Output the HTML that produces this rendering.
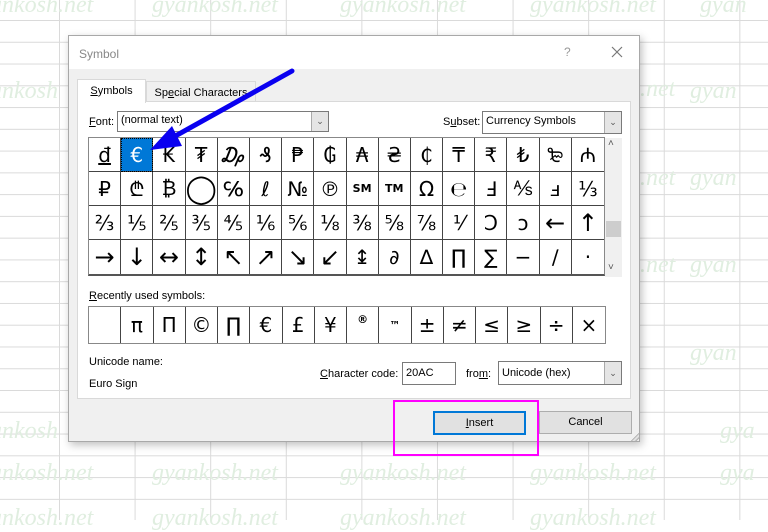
<!DOCTYPE html>
<html><head><meta charset="utf-8"><style>
*{margin:0;padding:0;box-sizing:border-box}
body{width:768px;height:520px;overflow:hidden;position:relative;background:#fff;font-family:"Liberation Sans","DejaVu Sans",sans-serif;font-size:11px;color:#000}
.bg{position:absolute;left:0;top:0;width:768px;height:520px;
background-image:linear-gradient(to right,#dadada 1px,transparent 1px),linear-gradient(to bottom,#dadada 1px,transparent 1px);
background-size:75.6px 21.78px;background-position:59px 20px}
.wm{position:absolute;font-family:"Liberation Serif",serif;font-style:italic;font-size:24px;color:#e0eee0;white-space:nowrap}
.dlg{position:absolute;left:68px;top:35px;width:572px;height:407px;background:#f0f0f0;border:1px solid #a8a8a8;box-shadow:2px 3px 8px rgba(0,0,0,.25)}
.title{position:absolute;left:0;top:0;width:570px;height:33px;background:#fff}
.abs{position:absolute}
.panel{position:absolute;left:8px;top:65px;width:554px;height:298px;background:#fff;border:1px solid #d9d9d9}
.tab{position:absolute;height:23px;border:1px solid #d9d9d9;border-bottom:none;font-size:11px;padding-top:5px;text-align:center}
.grid{position:absolute;left:88px;top:137px;width:517px;height:139px;border:1px solid #888;border-bottom:2px solid #555;display:grid;grid-template-columns:repeat(16,1fr);grid-template-rows:repeat(4,1fr);background:#fff}
.grid div,.recent div{border-right:1px solid #444;border-bottom:1px solid #444;display:flex;align-items:center;justify-content:center;font-size:20px;font-family:"DejaVu Sans",sans-serif;overflow:hidden}
.grid div:nth-child(16n){border-right:none}
.grid div:nth-child(n+49){border-bottom:none}
.recent{position:absolute;left:88px;top:306px;width:518px;height:38px;border:1px solid #888;display:grid;grid-template-columns:repeat(16,1fr);background:#fff}
.recent div{border-bottom:none}
.recent div:last-child{border-right:none}
.sel{background:#0078d7;color:#fff;outline:1px dotted #000;outline-offset:-1px}
.sm{font-size:11px!important;font-weight:bold}
.ar{font-size:24px!important}
.combo{position:absolute;background:#fff;border:1px solid #7a7a7a;font-size:11px;padding:2px 3px}
.combo .dd{position:absolute;right:0;top:0;bottom:0;width:17px;background:#e5e5e5;border-left:1px solid #aaa;text-align:center;font-size:9px;color:#555;line-height:19px}
.btn{position:absolute;background:#e1e1e1;border:1px solid #adadad;font-size:11px;text-align:center;line-height:21px}
u{text-decoration:underline}
</style></head><body>
<div class="bg"></div>
<div class="wm" style="left:-10px;top:-8px">ankosh.net</div>
<div class="wm" style="left:152px;top:-8px">gyankosh.net</div>
<div class="wm" style="left:340px;top:-8px">gyankosh.net</div>
<div class="wm" style="left:530px;top:-8px">gyankosh.net</div>
<div class="wm" style="left:700px;top:-8px">gyan</div>
<div class="wm" style="left:-10px;top:78px">ankosh</div>
<div class="wm" style="left:690px;top:78px">gyan</div>
<div class="wm" style="left:690px;top:165px">gyan</div>
<div class="wm" style="left:690px;top:252px">gyan</div>
<div class="wm" style="left:690px;top:340px">gyan</div>
<div class="wm" style="left:640px;top:76px">.net</div>
<div class="wm" style="left:640px;top:165px">.net</div>
<div class="wm" style="left:640px;top:252px">.net</div>
<div class="wm" style="left:-10px;top:418px">ankosh</div>
<div class="wm" style="left:720px;top:418px">gya</div>
<div class="wm" style="left:-10px;top:460px">ankosh.net</div>
<div class="wm" style="left:152px;top:460px">gyankosh.net</div>
<div class="wm" style="left:340px;top:460px">gyankosh.net</div>
<div class="wm" style="left:530px;top:460px">gyankosh.net</div>
<div class="wm" style="left:720px;top:460px">gya</div>
<div class="wm" style="left:-10px;top:505px">ankosh.net</div>
<div class="wm" style="left:152px;top:505px">gyankosh.net</div>
<div class="wm" style="left:340px;top:505px">gyankosh.net</div>
<div class="wm" style="left:530px;top:505px">gyankosh.net</div>

<div class="dlg">
<div class="title"></div>
<div class="abs" style="left:10px;top:11px;font-size:12px;color:#888">Symbol</div>
<div class="abs" style="left:495px;top:9px;font-size:12px;color:#999">?</div>
<svg class="abs" style="left:542px;top:10px" width="12" height="12"><path d="M1 1L11 11M11 1L1 11" stroke="#777" stroke-width="1.2"/></svg>
<div class="panel"></div>
<div class="tab" style="left:8px;top:43px;width:69px;height:24px;background:#fff"><u>S</u>ymbols</div>
<div class="tab" style="left:77px;top:45px;width:110px;background:#f0f0f0;border-bottom:1px solid #d9d9d9;height:21px">Sp<u>e</u>cial Characters</div>
<div class="abs" style="left:20px;top:80px"><u>F</u>ont:</div>
<div class="combo" style="left:48px;top:75px;width:212px;height:21px">(normal text)<div class="dd">⌄</div></div>
<div class="abs" style="left:374px;top:80px">S<u>u</u>bset:</div>
<div class="combo" style="left:413px;top:75px;width:140px;height:23px;padding-top:3px">Currency Symbols<div class="dd" style="line-height:21px">⌄</div></div>
<div class="abs" style="left:536px;top:102px;width:17px;height:139px;background:#f0f0f0"></div>
<div class="abs" style="left:539px;top:102px;font-size:10px;color:#555">˄</div>
<div class="abs" style="left:537px;top:185px;width:15px;height:16px;background:#cdcdcd"></div>
<div class="abs" style="left:539px;top:226px;font-size:10px;color:#555">˅</div>
<div class="abs" style="left:20px;top:254px"><u>R</u>ecently used symbols:</div>
<div class="abs" style="left:20px;top:320px">Unicode name:</div>
<div class="abs" style="left:20px;top:342px">Euro Sign</div>
<div class="abs" style="left:251px;top:332px"><u>C</u>haracter code:</div>
<div class="combo" style="left:333px;top:326px;width:54px;height:23px;padding-top:4px">20AC</div>
<div class="abs" style="left:397px;top:332px">fro<u>m</u>:</div>
<div class="combo" style="left:429px;top:325px;width:124px;height:24px;padding-top:5px">Unicode (hex)<div class="dd" style="line-height:22px">⌄</div></div>
<div class="btn" style="left:364px;top:375px;width:93px;height:24px;border:2px solid #0078d7;line-height:20px"><u>I</u>nsert</div>
<div class="btn" style="left:470px;top:375px;width:93px;height:23px">Cancel</div>
</div>

<div class="grid">
<div><u>đ</u></div><div class="sel">€</div><div>₭</div><div>₮</div><div style="font-style:italic">₯</div><div>₰</div><div>₱</div><div>₲</div><div>₳</div><div>₴</div><div>₵</div><div>₸</div><div>₹</div><div>₺</div><div>₻</div><div>₼</div>
<div>₽</div><div>₾</div><div>₿</div><div style="font-size:28px">◯</div><div>℅</div><div>ℓ</div><div>№</div><div>℗</div><div class="sm">SM</div><div class="sm">TM</div><div>Ω</div><div>℮</div><div>Ⅎ</div><div>⅍</div><div>ⅎ</div><div>⅓</div>
<div>⅔</div><div>⅕</div><div>⅖</div><div>⅗</div><div>⅘</div><div>⅙</div><div>⅚</div><div>⅛</div><div>⅜</div><div>⅝</div><div>⅞</div><div>⅟</div><div>Ↄ</div><div>ↄ</div><div class="ar">←</div><div class="ar">↑</div>
<div class="ar">→</div><div class="ar">↓</div><div class="ar">↔</div><div class="ar">↕</div><div class="ar">↖</div><div class="ar">↗</div><div class="ar">↘</div><div class="ar">↙</div><div>↨</div><div>∂</div><div>∆</div><div>∏</div><div>∑</div><div>−</div><div>∕</div><div>·</div>
</div>
<div class="recent">
<div></div><div>π</div><div>Π</div><div>©</div><div>∏</div><div>€</div><div>£</div><div>¥</div><div class="sm" style="align-items:flex-start;padding-top:6px">®</div><div class="sm">™</div><div>±</div><div>≠</div><div>≤</div><div>≥</div><div>÷</div><div>×</div>
</div>

<div class="abs" style="left:393px;top:400px;width:146px;height:56px;border:2px solid #ff00ff"></div>
<div class="abs" style="left:630px;top:432px;width:10px;height:10px;background:linear-gradient(135deg,transparent 50%,#aaa 50%,transparent 62%,#aaa 75%,transparent 80%)"></div>

<svg class="abs" style="left:0;top:0" width="768" height="520">
<line x1="292" y1="71" x2="170" y2="139" stroke="#0a00f0" stroke-width="5" stroke-linecap="round"/>
<polygon points="150,150 172,126 182,146" fill="#0a00f0"/>
</svg>
</body></html>
